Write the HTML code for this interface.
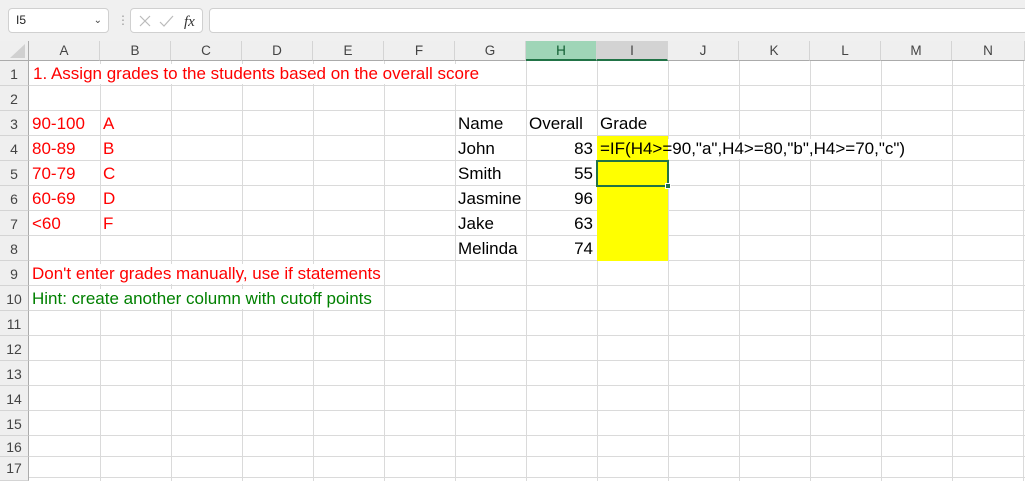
<!DOCTYPE html>
<html><head><style>
*{margin:0;padding:0;box-sizing:border-box}
body{width:1025px;height:481px;overflow:hidden;background:#f0f0f0;font-family:"Liberation Sans",sans-serif;position:relative}
.abs{position:absolute}
.box{background:#fff;border:1px solid #d0d0d0;border-radius:4px}
.grid{position:absolute;left:0;top:41px;width:1025px;height:440px;background:#fff}
.ch{position:absolute;top:0;height:20px;background:#efefef;border-right:1px solid #d4d4d4;border-bottom:1px solid #ababab;font-size:13.5px;color:#444;text-align:center;line-height:20px}
.rh{position:absolute;left:0;width:29px;background:#efefef;border-right:1px solid #ababab;border-bottom:1px solid #d4d4d4;font-size:14px;color:#444;text-align:center}
.vl{position:absolute;top:20px;width:1px;height:420px;background:#dadada}
.hl{position:absolute;left:29px;height:1px;width:996px;background:#dadada}
.t{position:absolute;font-size:17px;white-space:nowrap;line-height:20px;height:20px;margin-top:3px;color:#000}
.r{color:#f00}.g{color:#008000}
.w{background:#fff}
</style></head><body>
<div class="abs box" style="left:8px;top:8px;width:101px;height:25px;font-size:12px;line-height:23px;padding-left:7px;color:#222">I5<span style="position:absolute;right:6px;top:0;font-size:10px;color:#444">&#8964;</span></div>
<div class="abs" style="left:117px;top:13px;color:#999;font-size:12px">&#8942;</div>
<div class="abs box" style="left:130px;top:8px;width:73px;height:25px">
<svg width="73" height="25" style="position:absolute;left:0;top:0"><path d="M9 7l10 10M19 7L9 17" stroke="#bbb" stroke-width="1.2" fill="none"/><path d="M29 13l4 4 9-10" stroke="#bbb" stroke-width="1.2" fill="none"/><text x="53" y="17" font-family="Liberation Serif" font-style="italic" font-size="15" fill="#333">fx</text></svg></div>
<div class="abs box" style="left:209px;top:8px;width:830px;height:25px"></div>
<div class="grid">
<div class="ch" style="left:0;width:29px;border-right:1px solid #ababab"><svg width="29" height="20"><path d="M10 17h15V3z" fill="#d0d0d0"/></svg></div>
<div class="ch" style="left:29px;width:71px">A</div>
<div class="ch" style="left:100px;width:71px">B</div>
<div class="ch" style="left:171px;width:71px">C</div>
<div class="ch" style="left:242px;width:71px">D</div>
<div class="ch" style="left:313px;width:71px">E</div>
<div class="ch" style="left:384px;width:71px">F</div>
<div class="ch" style="left:455px;width:71px">G</div>
<div class="ch" style="left:526px;width:71px;background:#9fd5b7;color:#0e5c2f;border-bottom:2px solid #217346">H</div>
<div class="ch" style="left:597px;width:71px;background:#d3d3d3;border-bottom:2px solid #217346">I</div>
<div class="ch" style="left:668px;width:71px">J</div>
<div class="ch" style="left:739px;width:71px">K</div>
<div class="ch" style="left:810px;width:71px">L</div>
<div class="ch" style="left:881px;width:71px">M</div>
<div class="ch" style="left:952px;width:73px">N</div>
<div class="vl" style="left:100px"></div><div class="vl" style="left:171px"></div><div class="vl" style="left:242px"></div><div class="vl" style="left:313px"></div><div class="vl" style="left:384px"></div><div class="vl" style="left:455px"></div><div class="vl" style="left:526px"></div><div class="vl" style="left:597px"></div><div class="vl" style="left:668px"></div><div class="vl" style="left:739px"></div><div class="vl" style="left:810px"></div><div class="vl" style="left:881px"></div><div class="vl" style="left:952px"></div><div class="vl" style="left:1023px"></div>
<div class="rh" style="top:20px;height:25px;line-height:26px">1</div><div class="hl" style="top:44px"></div>
<div class="rh" style="top:45px;height:25px;line-height:26px">2</div><div class="hl" style="top:69px"></div>
<div class="rh" style="top:70px;height:25px;line-height:26px">3</div><div class="hl" style="top:94px"></div>
<div class="rh" style="top:95px;height:25px;line-height:26px">4</div><div class="hl" style="top:119px"></div>
<div class="rh" style="top:120px;height:25px;line-height:26px">5</div><div class="hl" style="top:144px"></div>
<div class="rh" style="top:145px;height:25px;line-height:26px">6</div><div class="hl" style="top:169px"></div>
<div class="rh" style="top:170px;height:25px;line-height:26px">7</div><div class="hl" style="top:194px"></div>
<div class="rh" style="top:195px;height:25px;line-height:26px">8</div><div class="hl" style="top:219px"></div>
<div class="rh" style="top:220px;height:25px;line-height:26px">9</div><div class="hl" style="top:244px"></div>
<div class="rh" style="top:245px;height:25px;line-height:26px">10</div><div class="hl" style="top:269px"></div>
<div class="rh" style="top:270px;height:25px;line-height:26px">11</div><div class="hl" style="top:294px"></div>
<div class="rh" style="top:295px;height:25px;line-height:26px">12</div><div class="hl" style="top:319px"></div>
<div class="rh" style="top:320px;height:25px;line-height:26px">13</div><div class="hl" style="top:344px"></div>
<div class="rh" style="top:345px;height:25px;line-height:26px">14</div><div class="hl" style="top:369px"></div>
<div class="rh" style="top:370px;height:25px;line-height:26px">15</div><div class="hl" style="top:394px"></div>
<div class="rh" style="top:395px;height:21px;line-height:22px">16</div><div class="hl" style="top:415px"></div>
<div class="rh" style="top:416px;height:24px;line-height:22px">17</div><div class="hl" style="top:436px"></div>
<div class="abs" style="left:597px;top:95px;width:71px;height:125px;background:#ff0"></div>
<div class="t r w" style="left:30px;top:20px;padding-left:3px;padding-right:4px">1. Assign grades to the students based on the overall score</div>
<div class="t r" style="left:32px;top:70px">90-100</div><div class="t r" style="left:103px;top:70px">A</div>
<div class="t r" style="left:32px;top:95px">80-89</div><div class="t r" style="left:103px;top:95px">B</div>
<div class="t r" style="left:32px;top:120px">70-79</div><div class="t r" style="left:103px;top:120px">C</div>
<div class="t r" style="left:32px;top:145px">60-69</div><div class="t r" style="left:103px;top:145px">D</div>
<div class="t r" style="left:32px;top:170px">&lt;60</div><div class="t r" style="left:103px;top:170px">F</div>
<div class="t r w" style="left:30px;top:220px;padding-left:2px;padding-right:3px">Don't enter grades manually, use if statements</div>
<div class="t g w" style="left:30px;top:245px;padding-left:2px;padding-right:3px">Hint: create another column with cutoff points</div>
<div class="t" style="left:458px;top:70px">Name</div><div class="t" style="left:529px;top:70px">Overall</div><div class="t" style="left:600px;top:70px">Grade</div>
<div class="t" style="left:458px;top:95px">John</div><div class="t" style="left:526px;top:95px;width:67px;text-align:right">83</div>
<div class="t" style="left:598px;top:95px;padding-left:2px;padding-right:3px;background:linear-gradient(90deg,#ff0 70px,#fff 70px)">=IF(H4&gt;=90,"a",H4&gt;=80,"b",H4&gt;=70,"c")</div>
<div class="t" style="left:458px;top:120px">Smith</div><div class="t" style="left:526px;top:120px;width:67px;text-align:right">55</div>
<div class="t" style="left:458px;top:145px">Jasmine</div><div class="t" style="left:526px;top:145px;width:67px;text-align:right">96</div>
<div class="t" style="left:458px;top:170px">Jake</div><div class="t" style="left:526px;top:170px;width:67px;text-align:right">63</div>
<div class="t" style="left:458px;top:195px">Melinda</div><div class="t" style="left:526px;top:195px;width:67px;text-align:right">74</div>
<div class="abs" style="left:596px;top:119px;width:73px;height:27px;border:2px solid #217346"></div>
<div class="abs" style="left:665px;top:142px;width:6px;height:6px;background:#217346;border:1px solid #fff"></div>
</div>
</body></html>
